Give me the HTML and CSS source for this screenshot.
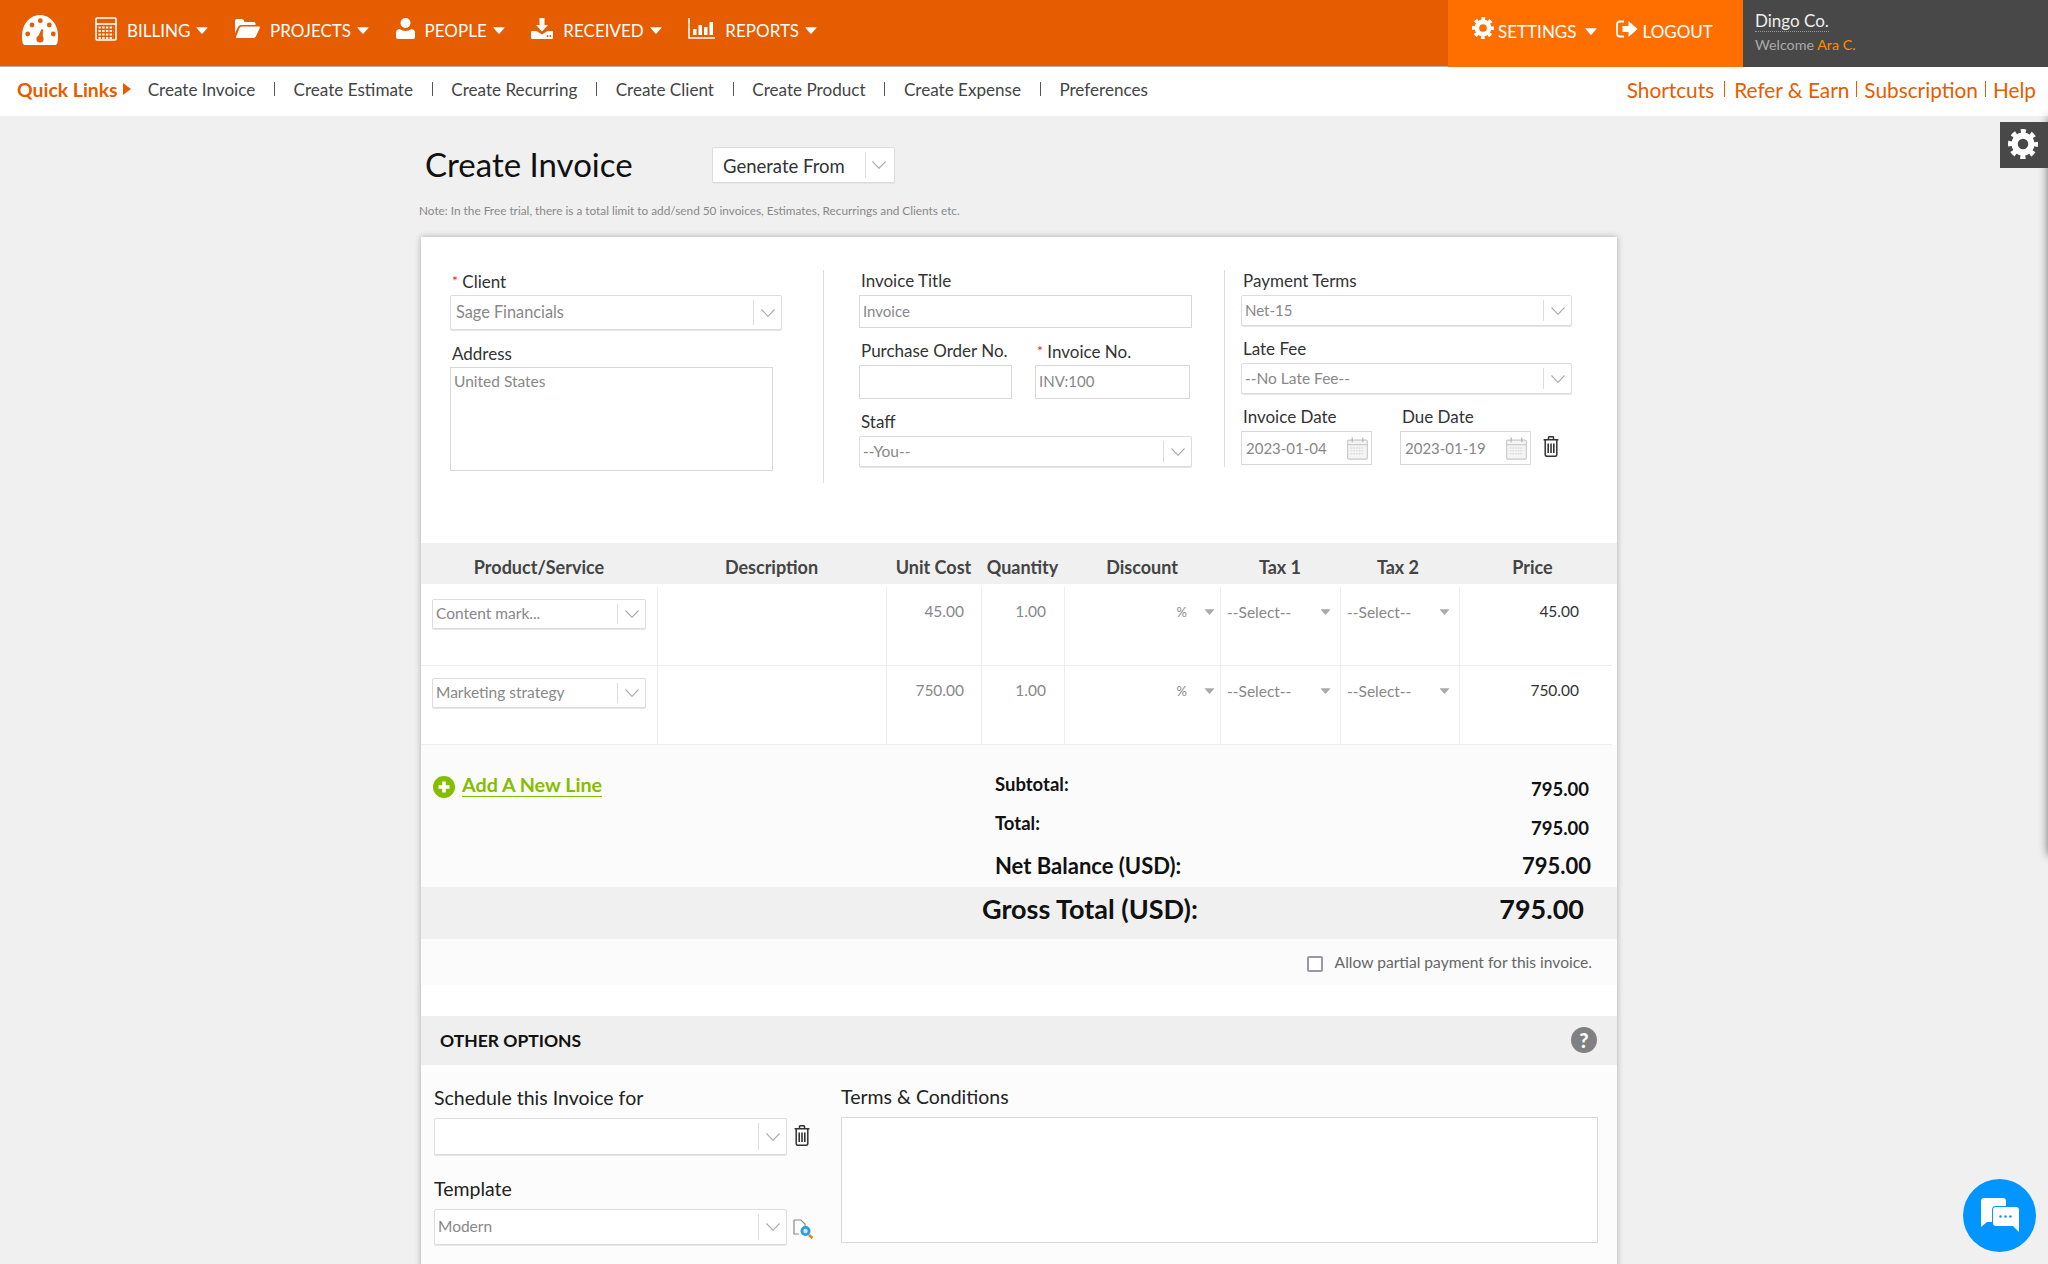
FILE: index.html
```html
<!DOCTYPE html>
<html lang="en">
<head>
<meta charset="utf-8">
<title>Create Invoice</title>
<link rel="stylesheet" href="styles.css">
</head>
<body>
<svg class="defs" width="0" height="0" aria-hidden="true">
  <symbol id="gear" viewBox="0 0 24 24">
    <circle cx="12" cy="12" r="10" fill="none" stroke="currentColor" stroke-width="4" stroke-dasharray="4 3.854" stroke-dashoffset="2"/>
    <circle cx="12" cy="12" r="6.7" fill="none" stroke="currentColor" stroke-width="5"/>
  </symbol>
  <symbol id="chev" viewBox="0 0 14 8">
    <path d="M.5.5 7 7.3 13.5.5" fill="none" stroke="currentColor" stroke-width="1.1"/>
  </symbol>
  <symbol id="caret" viewBox="0 0 12 7">
    <path d="M1 .3h10q.9 0 .4.7L6.6 6.4q-.6.6-1.2 0L.6 1Q.1.3 1 .3z" fill="currentColor"/>
  </symbol>
  <symbol id="trash" viewBox="0 0 16 21">
    <path d="M5.5 3.2V1.6q0-.9.9-.9h3.2q.9 0 .9.9v1.6M.6 3.8h14.8M2.2 4v14.6q0 1.7 1.7 1.7h8.2q1.7 0 1.7-1.7V4" fill="none" stroke="currentColor" stroke-width="1.5"/>
    <path d="M5.2 7.5v9.5M8 7.5v9.5M10.8 7.5v9.5" fill="none" stroke="currentColor" stroke-width="1.6"/>
  </symbol>
  <symbol id="cal" viewBox="0 0 22 24">
    <rect x=".7" y="3.2" width="20.6" height="20" rx="1.5" fill="#f4f4f4" stroke="#c8c8c8" stroke-width="1.2"/>
    <path d="M.7 8h20.6" stroke="#c8c8c8" stroke-width="1.2"/>
    <path d="M5.5.5v5M16.5.5v5" stroke="#bbb" stroke-width="1.4"/>
    <path d="M4 11.5h14M4 14.5h14M4 17.5h14" stroke="#d8d8d8" stroke-width="1.4" stroke-dasharray="1.6 1.2"/>
  </symbol>
</svg>

<header class="topbar">
  <svg class="logo" viewBox="0 0 36 30" width="36" height="30">
    <path d="M3 30C1 30 0 28 0 21 0 9 8 0 18 0s18 9 18 21c0 7-1 9-3 9z" fill="#fff"/>
    <g fill="#e65c00">
      <circle cx="5.7" cy="19" r="2.4"/><circle cx="10" cy="10" r="2.4"/><circle cx="18.3" cy="5.7" r="2.4"/><circle cx="27.3" cy="10" r="2.4"/><circle cx="31.3" cy="19" r="2.4"/>
      <circle cx="18" cy="24" r="3.6"/><path d="M15.5 23 19.5 14l1.5.4L20.6 24z"/>
    </g>
  </svg>
  <nav class="mainnav">
    <a class="navitem">
      <svg class="navicon" width="22" height="24" viewBox="0 0 22 24">
        <rect x="1" y="1" width="20" height="22" rx="1" fill="none" stroke="#fff" stroke-width="1.6"/>
        <path d="M1 7h20" stroke="#fff" stroke-width="1.6"/>
        <path d="M3.5 10.5h15M3.5 14h15M3.5 17.5h15M3.5 21h15" stroke="#fff" stroke-width="2.2" stroke-dasharray="2.4 1.3"/>
      </svg>
      <span>BILLING</span><svg class="navcaret"><use href="#caret"/></svg>
    </a>
    <a class="navitem">
      <svg class="navicon" width="25" height="19" viewBox="0 0 25 19">
        <path d="M0 2q0-2 2-2h5q1.500 0 2 1.500L9.500 3H19q1.500 0 1.500 1.500V6H6q-2 0-3 2L0 14z" fill="#fff"/>
        <path d="M6.500 7.500H24q1.500 0 .8 1.500L21 17q-.8 2-2.500 2H1.500q-1 0-.5-1L4.500 9q.7-1.500 2-1.500z" fill="#fff"/>
      </svg>
      <span>PROJECTS</span><svg class="navcaret"><use href="#caret"/></svg>
    </a>
    <a class="navitem">
      <svg class="navicon" width="19" height="21" viewBox="0 0 19 21">
        <circle cx="9.500" cy="5" r="5" fill="#fff"/>
        <path d="M0 14.500q0-3 3.500-3.500 3 2 6 2t6-2q3.500.5 3.500 3.500V19q0 2-2 2H2q-2 0-2-2z" fill="#fff"/>
      </svg>
      <span>PEOPLE</span><svg class="navcaret"><use href="#caret"/></svg>
    </a>
    <a class="navitem">
      <svg class="navicon" width="22" height="21" viewBox="0 0 22 21">
        <path d="M8.500 0h5v7H17l-6 6.500L5 7h3.500z" fill="#fff"/>
        <path d="M1 13h4.500l5.500 3.500 5.500-3.500H21q1 0 1 1v6q0 1-1 1H1q-1 0-1-1v-6q0-1 1-1z" fill="#fff"/>
        <circle cx="16.500" cy="18" r="1" fill="#e65c00"/><circle cx="19.300" cy="18" r="1" fill="#e65c00"/>
      </svg>
      <span>RECEIVED</span><svg class="navcaret"><use href="#caret"/></svg>
    </a>
    <a class="navitem">
      <svg class="navicon" width="27" height="21" viewBox="0 0 27 21">
        <path d="M1 0v20h26" fill="none" stroke="#fff" stroke-width="1.500"/>
        <path d="M5 11h3.500v6H5zM10.500 7H14v10h-3.500zM16 9h3.500v8H16zM21.500 4H25v13h-3.500z" fill="#fff"/>
      </svg>
      <span>REPORTS</span><svg class="navcaret"><use href="#caret"/></svg>
    </a>
  </nav>
  <div class="settings">
    <a class="setitem"><svg class="setgear"><use href="#gear"/></svg><span>SETTINGS</span><svg class="navcaret setcaret"><use href="#caret"/></svg></a>
    <a class="setitem logout">
      <svg class="logouticon" width="22" height="20" viewBox="0 0 22 20">
        <path d="M8 2.500H4Q1 2.500 1 5.500v9q0 3 3 3h4" fill="none" stroke="#fff" stroke-width="1.800"/>
        <path d="M6.500 7h6V2l9 8-9 8v-5h-6z" fill="#fff"/>
      </svg>
      <span>LOGOUT</span>
    </a>
  </div>
  <div class="account">
    <div class="company"><span>Dingo Co.</span></div>
    <div class="welcome">Welcome <em>Ara C.</em></div>
  </div>
</header>

<div class="quickbar">
  <div class="quicklinks">
    <strong class="qtitle">Quick Links</strong>
    <svg class="qtri" width="8" height="12" viewBox="0 0 8 12"><path d="M0 0l8 6-8 6z" fill="#e65c00"/></svg>
    <a class="qlink">Create Invoice</a><i class="qsep"></i>
    <a class="qlink">Create Estimate</a><i class="qsep"></i>
    <a class="qlink">Create Recurring</a><i class="qsep"></i>
    <a class="qlink">Create Client</a><i class="qsep"></i>
    <a class="qlink">Create Product</a><i class="qsep"></i>
    <a class="qlink">Create Expense</a><i class="qsep"></i>
    <a class="qlink">Preferences</a>
  </div>
  <div class="helplinks">
    <a>Shortcuts</a><i class="hsep hsep-wide"></i><a>Refer &amp; Earn</a><i class="hsep"></i><a>Subscription</a><i class="hsep"></i><a>Help</a>
  </div>
</div>

<div class="geartab"><svg class="geartab-icon"><use href="#gear"/></svg></div>
<div class="edgepanel"></div>

<main class="page">
  <div class="titlerow">
    <h1 class="title">Create Invoice</h1>
    <div class="sel sel-gen"><span class="val">Generate From</span><span class="arrow"><svg class="chev"><use href="#chev"/></svg></span></div>
  </div>
  <p class="note">Note: In the Free trial, there is a total limit to add/send 50 invoices, Estimates, Recurrings and Clients etc.</p>

  <section class="card">
    <div class="formtop">
      <div class="col col1">
        <div class="field"><label class="lab"><b class="req">*</b> Client</label>
          <div class="sel h35"><span class="val val-client">Sage Financials</span><span class="arrow"><svg class="chev"><use href="#chev"/></svg></span></div></div>
        <div class="field"><label class="lab lab-addr">Address</label>
          <div class="box box-addr">United States</div></div>
      </div>
      <div class="col col2">
        <div class="field"><label class="lab">Invoice Title</label><div class="inp h33">Invoice</div></div>
        <div class="pair">
          <div class="field f-po"><label class="lab">Purchase Order No.</label><div class="inp h34"></div></div>
          <div class="field f-no"><label class="lab"><b class="req">*</b> Invoice No.</label><div class="inp h34">INV:100</div></div>
        </div>
        <div class="field"><label class="lab">Staff</label>
          <div class="sel h31"><span class="val">--You--</span><span class="arrow"><svg class="chev"><use href="#chev"/></svg></span></div></div>
      </div>
      <div class="col col3">
        <div class="field"><label class="lab">Payment Terms</label>
          <div class="sel h31"><span class="val val-net">Net-15</span><span class="arrow"><svg class="chev"><use href="#chev"/></svg></span></div></div>
        <div class="field"><label class="lab">Late Fee</label>
          <div class="sel h31"><span class="val">--No Late Fee--</span><span class="arrow"><svg class="chev"><use href="#chev"/></svg></span></div></div>
        <div class="pair dates">
          <div class="field f-date"><label class="lab">Invoice Date</label><div class="inp h34 dateinp"><span>2023-01-04</span><svg class="cal"><use href="#cal"/></svg></div></div>
          <div class="field f-date"><label class="lab">Due Date</label><div class="inp h34 dateinp"><span>2023-01-19</span><svg class="cal"><use href="#cal"/></svg></div></div>
          <svg class="trash trash-date"><use href="#trash"/></svg>
        </div>
      </div>
    </div>

    <div class="grid thead">
      <div>Product/Service</div><div>Description</div><div>Unit Cost</div><div>Quantity</div><div>Discount</div><div>Tax 1</div><div class="th-tax2">Tax 2</div><div class="th-price">Price</div>
    </div>
    <div class="grid trow first">
      <div class="td td-prod"><div class="sel h30"><span class="val val-prod">Content mark...</span><span class="arrow"><svg class="chev"><use href="#chev"/></svg></span></div></div>
      <div class="td"></div>
      <div class="td num n-cost">45.00</div>
      <div class="td num n-qty">1.00</div>
      <div class="td td-disc"><span>%</span><svg class="gcaret"><use href="#caret"/></svg></div>
      <div class="td td-tax"><span>--Select--</span><svg class="gcaret"><use href="#caret"/></svg></div>
      <div class="td td-tax"><span>--Select--</span><svg class="gcaret"><use href="#caret"/></svg></div>
      <div class="td num n-price">45.00</div>
    </div>
    <div class="grid trow">
      <div class="td td-prod"><div class="sel h30"><span class="val val-prod">Marketing strategy</span><span class="arrow"><svg class="chev"><use href="#chev"/></svg></span></div></div>
      <div class="td"></div>
      <div class="td num n-cost">750.00</div>
      <div class="td num n-qty">1.00</div>
      <div class="td td-disc"><span>%</span><svg class="gcaret"><use href="#caret"/></svg></div>
      <div class="td td-tax"><span>--Select--</span><svg class="gcaret"><use href="#caret"/></svg></div>
      <div class="td td-tax"><span>--Select--</span><svg class="gcaret"><use href="#caret"/></svg></div>
      <div class="td num n-price">750.00</div>
    </div>

    <div class="summary">
      <div class="addline">
        <svg class="addicon" width="22" height="22" viewBox="0 0 22 22"><circle cx="11" cy="11" r="11" fill="#85bd00"/><path d="M11 5.500v11M5.500 11h11" stroke="#fff" stroke-width="3.600"/></svg>
        <a>Add A New Line</a>
      </div>
      <div class="totals">
        <div class="trline small"><span class="tl">Subtotal:</span><span class="tv">795.00</span></div>
        <div class="trline small r2"><span class="tl">Total:</span><span class="tv">795.00</span></div>
        <div class="trline net"><span class="tl">Net Balance (USD):</span><span class="tv">795.00</span></div>
      </div>
    </div>
    <div class="gross"><span class="gl">Gross Total (USD):</span><span class="gv">795.00</span></div>
    <div class="partial"><i class="check"></i><span>Allow partial payment for this invoice.</span></div>
    <div class="spacer"></div>
    <div class="otherhead"><strong>OTHER OPTIONS</strong><span class="helpq">?</span></div>
    <div class="other">
      <div class="other-left">
        <label class="lab2">Schedule this Invoice for</label>
        <div class="rowic">
          <div class="sel h37"><span class="val"></span><span class="arrow"><svg class="chev"><use href="#chev"/></svg></span></div>
          <svg class="trash trash-sch"><use href="#trash"/></svg>
        </div>
        <label class="lab2 lab-tpl">Template</label>
        <div class="rowic">
          <div class="sel h36"><span class="val">Modern</span><span class="arrow"><svg class="chev"><use href="#chev"/></svg></span></div>
          <svg class="docicon" width="21" height="20" viewBox="0 0 21 20">
            <path d="M1 1h7l4 4v3M1 1v14h5" fill="none" stroke="#8a8a8a" stroke-width="1.200"/>
            <circle cx="12.500" cy="12" r="5" fill="#2c9be6"/><circle cx="12.500" cy="12" r="2.200" fill="#cfeaff"/>
            <path d="M16 16l3.500 3" stroke="#e08a1e" stroke-width="2.800"/>
          </svg>
        </div>
      </div>
      <div class="other-right">
        <label class="lab2">Terms &amp; Conditions</label>
        <div class="box box-terms"></div>
      </div>
    </div>
  </section>
</main>

<div class="chat">
  <svg width="38" height="35" viewBox="0 0 38 35">
    <path d="M3 0h19q3 0 3 3v5H15q-4 0-4 4v12H6l-6 5V3q0-3 3-3z" fill="#fff"/>
    <path d="M15 9h20q3 0 3 3v15 7l-6-6H15q-3 0-3-3V12q0-3 3-3z" fill="#fff"/>
    <g fill="#0095ff"><circle cx="19.500" cy="18.500" r="1.200"/><circle cx="24.500" cy="18.500" r="1.200"/><circle cx="29.500" cy="18.500" r="1.200"/></g>
  </svg>
</div>
</body>
</html>
```
FILE: styles.css
```css
* { box-sizing: border-box; }
html, body { margin: 0; height: 1264px; overflow: hidden; }
body { position: relative; background: #f0f0f0; font-family: "Lato", "Liberation Sans", sans-serif; color: #333; font-size: 17px; }
a { color: inherit; text-decoration: none; }
i, em { font-style: normal; }
.defs { position: absolute; }

/* top bar */
.topbar { height: 67px; background: #e65c00; display: flex; color: #fff; border-bottom: 1px solid #b9b2ac; position: relative; }
.logo { margin: 15px 0 0 22px; flex: none; }
.mainnav { display: flex; align-items: center; margin-left: 37px; gap: 26.600px; flex: 1; font-size: 17px; padding-bottom: 5px; }
.navitem { display: flex; align-items: center; }
.navicon { margin: -4px 10px 0 0; }
.navcaret { width: 12px; height: 7px; margin-left: 6px; color: #fff; }
.settings { width: 295px; background: #ff6f00; display: flex; align-items: center; padding: 0 0 5px 24px; font-size: 17px; margin-bottom: -1px; }
.setitem { display: flex; align-items: center; }
.setgear { width: 22px; height: 22px; color: #fff; margin-right: 4px; margin-top: -6px; }
.setcaret { margin-left: 8px; }
.logout { margin-left: 19px; }
.logouticon { margin-right: 5px; margin-top: -4px; }
.account { width: 305px; background: #484848; padding: 10px 0 0 12px; margin-bottom: -1px; }
.company { font-size: 17px; line-height: 22px; color: #eee; }
.company span { border-bottom: 1px dotted #999; display: inline-block; line-height: 20px; }
.welcome { font-size: 14.300px; line-height: 18px; color: #aaa; margin-top: 4px; }
.welcome em { color: #ff8c00; }

/* quick bar */
.quickbar { height: 49px; background: #fff; display: flex; align-items: center; justify-content: space-between; padding: 0 12px 5px 17px; }
.quicklinks { display: flex; align-items: center; font-size: 17.100px; color: #444; }
.qtitle { color: #e65c00; font-size: 19.400px; }
.qtri { margin: 0 17px 0 5px; }
.qsep { width: 1px; height: 14px; background: #555; margin: 0 18.700px; }
.helplinks { display: flex; align-items: center; color: #e65c00; font-size: 20.800px; }
.hsep { width: 1px; height: 16px; background: #e65c00; margin: 0 7px; }
.hsep-wide { margin: 0 9px 0 10px; }

/* overlays */
.geartab { position: absolute; right: 0; top: 122px; width: 48px; height: 46px; background: #484848; color: #fff; display: flex; align-items: center; justify-content: center; z-index: 2; padding: 0 3px 3px 0; }
.geartab-icon { width: 30px; height: 30px; }
.edgepanel { position: absolute; left: 2048px; top: 118px; width: 20px; height: 737px; box-shadow: 0 0 10px rgba(0,0,0,.55); }
.chat { position: absolute; left: 1963px; top: 1179px; width: 73px; height: 73px; border-radius: 50%; background: #0095ff; display: flex; align-items: center; justify-content: center; }

/* page */
.page { margin-left: 421px; width: 1196px; }
.titlerow { display: flex; align-items: center; padding: 31px 0 0 4px; }
.title { margin: -2px 0 0; width: 287px; font-size: 33px; font-weight: 400; color: #111; line-height: 36px; }
.note { margin: 20px 0 18px -2px; font-size: 11.800px; line-height: 16px; color: #888; }

.card { background: #fff; box-shadow: 0 0 6px rgba(0,0,0,.3); }

/* form top */
.formtop { height: 306px; display: flex; padding: 33px 0 0 29px; }
.col { display: flex; flex-direction: column; gap: 12px; }
.col1 { width: 373px; }
.col1 .sel { width: 332px; }
.col2 { width: 401px; height: 213px; border-left: 1px solid #ddd; padding: 0 32px 0 35px; }
.col3 { width: 348px; height: 197px; border-left: 1px solid #ddd; padding: 0 0 0 16px; }
.lab { display: block; height: 22px; line-height: 22px; margin: 0 0 3px 2px; color: #333; font-size: 17px; }
.lab-addr { line-height: 24px; }
.req { color: #e22; font-weight: 400; font-size: 14px; vertical-align: 2px; }
.sel { display: flex; align-items: center; background: #fff; border: 1px solid #ddd; border-radius: 2px; color: #888; font-size: 15.500px; box-shadow: 0 1px 0 #e6e6e6; }
.sel .val { flex: 1; padding: 0 0 2px 3px; white-space: nowrap; overflow: hidden; }
.sel .arrow { flex: none; width: 28px; height: calc(100% - 8px); border-left: 1px solid #ddd; display: flex; align-items: center; justify-content: center; }
.chev { width: 14px; height: 8px; color: #aaa; }
.h30 { height: 30px; } .h31 { height: 31px; } .h33 { height: 33px; } .h34 { height: 34px; } .h35 { height: 35px; } .h36 { height: 36px; } .h37 { height: 37px; }
.sel .val-client { padding-left: 5px; font-size: 16.300px; }
.sel .val-net { font-size: 15px; }
.inp { display: flex; align-items: center; border: 1px solid #d8d8d8; background: #fff; padding: 0 3px 2px; color: #888; font-size: 15px; }
.box { border: 1px solid #d8d8d8; background: #fff; color: #888; font-size: 15.500px; }
.box-addr { width: 323px; height: 104px; padding: 3px 3px; line-height: 20px; }
.pair { display: flex; }
.f-po { width: 153px; margin-right: 23px; }
.f-no { width: 155px; }
.dates { align-items: flex-start; }
.f-date { width: 131px; margin-right: 28px; }
.dateinp { justify-content: space-between; padding: 0 3px 0 4px; }
.cal { width: 21px; height: 23px; margin-top: 1px; }
.trash { width: 16px; height: 21px; color: #333; flex: none; }
.trash-date { margin: 30px 0 0 -16px; }

/* selects in header */
.sel-gen { width: 183px; height: 36px; color: #333; font-size: 18.500px; }
.sel-gen .val { padding: 2px 0 0 10px; }
.sel-gen .arrow { width: 29px; padding-right: 2px; }

/* table */
.grid { display: grid; grid-template-columns: 236px 229px 95px 83px 156px 120px 119px 1fr; }
.thead { height: 41px; padding-top: 6px; background: #f0f0f0; font-weight: 700; color: #444; font-size: 18px; line-height: 36px; text-align: center; white-space: nowrap; }
.th-tax2 { padding-right: 3px; }
.th-price { padding-right: 11px; }
.trow { height: 79px; margin-right: 5px; border-bottom: 1px solid #eee; color: #888; font-size: 15.500px; }
.trow.first { margin-top: 3px; }
.td { border-left: 1px solid #eee; }
.td:first-child { border-left: 0; }
.td-prod { padding: 12px 0 0 11px; }
.td-prod .sel { width: 214px; }
.sel .val-prod { padding-left: 3px; }
.num { text-align: right; padding-top: 14px; line-height: 20px; }
.n-cost { padding-right: 17px; }
.n-qty { padding-right: 18px; }
.n-price { padding-right: 33px; color: #333; }
.td-disc, .td-tax { display: flex; align-items: flex-start; line-height: 20px; padding-top: 15px; }
.td-disc { justify-content: flex-end; padding-right: 5px; font-size: 13px; }
.td-disc span { margin-right: 17px; }
.td-tax { justify-content: space-between; padding-left: 6px; padding-right: 9px; }
.gcaret { width: 11px; height: 6px; color: #aaa; margin-top: 7px; }

/* summary */
.summary { height: 142px; background: #fbfbfb; display: flex; }
.addline { width: 574px; padding: 30px 0 0 12px; display: flex; align-items: flex-start; color: #85bd00; font-weight: 700; font-size: 19.700px; }
.addicon { margin: 1px 7px 0 0; }
.addline a { border-bottom: 1px solid #85bd00; line-height: 23px; margin-top: -2px; }
.totals { flex: 1; padding: 27px 28px 0 0; }
.trline { display: flex; justify-content: space-between; line-height: 24px; color: #111; }
.small { height: 39px; font-size: 18.500px; }
.small .tl { font-weight: 700; }
.small .tv { margin-top: 5px; font-weight: 700; }
.r2 { height: 43px; }
.net { font-size: 22px; font-weight: 700; }
.net .tv { margin-right: -2px; }
.gross { height: 52px; background: #f0f0f0; display: flex; align-items: center; justify-content: space-between; padding: 0 33px 9px 561px; font-size: 27px; font-weight: 700; color: #111; }
.partial { height: 46px; background: #fbfbfb; display: flex; align-items: center; justify-content: flex-end; padding-right: 25px; font-size: 15.600px; color: #666; }
.check { width: 16px; height: 16px; border: 2px solid #9a98a4; border-radius: 2px; margin: 3px 12px 0 0; background: #fff; }
.spacer { height: 31px; }
.otherhead { height: 49px; background: #efefef; display: flex; align-items: center; justify-content: space-between; padding: 0 20px 1px 19px; font-size: 17.500px; color: #111; }
.helpq { width: 26px; height: 26px; border-radius: 50%; background: #808080; color: #fff; font-weight: 900; font-size: 20px; line-height: 26px; text-align: center; }
.other { height: 260px; background: #fcfcfc; display: flex; padding: 21px 0 0 13px; }
.other-left { width: 407px; }
.other-right { width: 757px; margin-top: -1px; }
.lab2 { display: block; font-size: 19.500px; line-height: 24px; margin-bottom: 8px; color: #222; }
.lab-tpl { margin-top: 22px; }
.rowic { display: flex; align-items: center; }
.rowic .sel { width: 353px; }
.trash-sch { margin: -3px 0 0 7px; }
.docicon { margin: 4px 0 0 6px; }
.box-terms { height: 126px; }
```
